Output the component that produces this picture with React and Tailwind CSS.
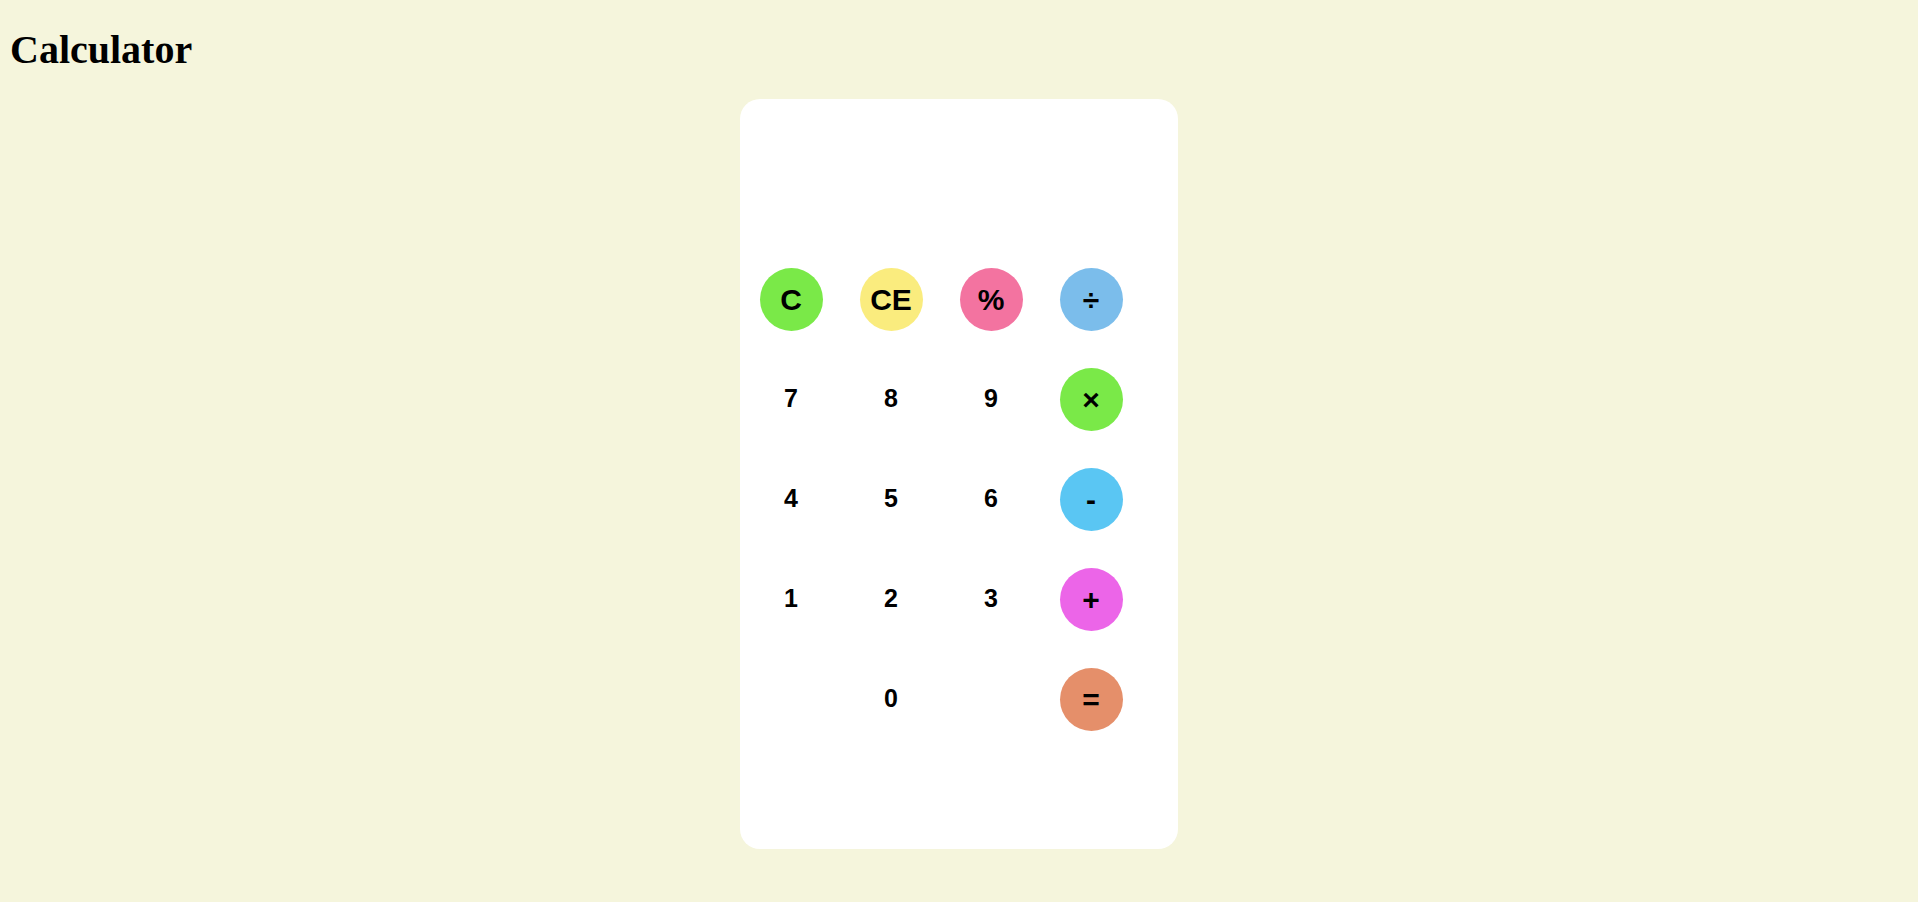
import React from 'react';

const rows = [
  [
    { label: 'C', color: 'bg-[#7ae948]' },
    { label: 'CE', color: 'bg-[#faec7e]' },
    { label: '%', color: 'bg-[#f373a0]' },
    { label: '÷', color: 'bg-[#7bbdeb]' },
  ],
  [{ label: '7' }, { label: '8' }, { label: '9' }, { label: '×', color: 'bg-[#7ae948]' }],
  [{ label: '4' }, { label: '5' }, { label: '6' }, { label: '-', color: 'bg-[#5ac6f3]' }],
  [{ label: '1' }, { label: '2' }, { label: '3' }, { label: '+', color: 'bg-[#ec65e8]' }],
  [null, { label: '0' }, null, { label: '=', color: 'bg-[#e58f6a]' }],
];

const Key = ({ keyDef }) => {
  if (!keyDef) return <div />;
  // coloured keys are round and use a bigger label
  if (keyDef.color) {
    return (
      <div className="flex items-center justify-center">
        <button
          className={`w-[63px] h-[63px] rounded-full flex items-center justify-center text-[30px] font-bold text-black ${keyDef.color}`}
        >
          {keyDef.label}
        </button>
      </div>
    );
  }
  return (
    <div className="flex items-center justify-center">
      <button className="text-[25px] font-bold text-black">{keyDef.label}</button>
    </div>
  );
};

export default function App() {
  return (
    <div className="min-h-screen bg-[#f5f5dc] px-[10px] flow-root">
      <h1
        className="mt-[27px] mb-[26px] text-[40px] leading-[46px] font-bold text-black"
        style={{ fontFamily: '"Liberation Serif", "Times New Roman", serif' }}
      >
        Calculator
      </h1>

      <div
        className="mx-auto w-[438px] h-[750px] bg-white rounded-[20px] pl-[1px]"
        style={{ fontFamily: '"Liberation Sans", Arial, sans-serif' }}
      >
        {/* display area (empty) */}
        <div className="h-[150px]" />

        <div className="grid grid-cols-[repeat(4,100px)] auto-rows-[100px]">
          {rows.flat().map((k, i) => (
            <Key key={i} keyDef={k} />
          ))}
        </div>
      </div>
    </div>
  );
}
